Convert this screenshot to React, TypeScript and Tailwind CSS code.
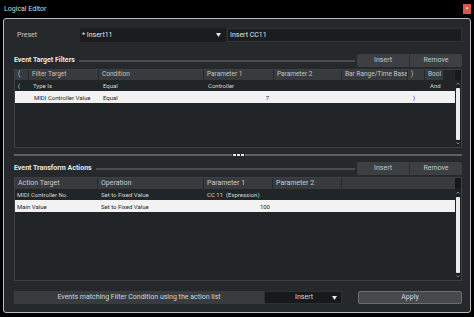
import React from 'react'

type Col = { w: string; label: string }

const filterCols: Col[] = [
  { w: 'w-[14px]', label: '(' },
  { w: 'w-[70px]', label: 'Filter Target' },
  { w: 'w-[105px]', label: 'Condition' },
  { w: 'w-[70px]', label: 'Parameter 1' },
  { w: 'w-[68px]', label: 'Parameter 2' },
  { w: 'w-[66px]', label: 'Bar Range/Time Base' },
  { w: 'w-[17px]', label: ')' },
  { w: 'w-[19px]', label: 'Bool' },
]

const actionCols: Col[] = [
  { w: 'w-[83px]', label: 'Action Target' },
  { w: 'w-[106px]', label: 'Operation' },
  { w: 'w-[69px]', label: 'Parameter 1' },
  { w: 'w-[69px]', label: 'Parameter 2' },
]

function Caret({ className = '' }: { className?: string }) {
  return (
    <svg width="5" height="4" viewBox="0 0 5 4" className={className}>
      <path d="M0 0 L5 0 L2.5 4 Z" fill="#e8e8e8" />
    </svg>
  )
}

function ScrollBar() {
  return (
    <div className="w-[6px] flex flex-col items-center bg-[#1f2225]">
      <svg width="4" height="3" viewBox="0 0 4 3" className="mt-[2px]">
        <path d="M0.5 2.5 L2 1 L3.5 2.5" stroke="#9a9da0" strokeWidth="0.8" fill="none" />
      </svg>
      <div className="mt-[3px] w-[4px] flex-1 rounded-[1px] bg-[#ececec]" />
      <svg width="4" height="3" viewBox="0 0 4 3" className="mt-[2px] mb-[2px]">
        <path d="M0.5 0.5 L2 2 L3.5 0.5" stroke="#9a9da0" strokeWidth="0.8" fill="none" />
      </svg>
    </div>
  )
}

function SectionHeader({ title }: { title: string }) {
  return (
    <div className="h-[13px] flex items-center">
      <span className="text-[7px] font-bold text-[#e6e6e6] whitespace-nowrap">{title}</span>
      <div className="flex-1 h-[2px] bg-[#4a4d50] ml-[4px] mr-[2px]" />
      <div className="w-[105px] h-[13px] flex rounded-[2px] bg-[#3d4043] text-[7px] text-[#c4c7ca]">
        <div className="flex-1 flex items-center justify-center border-r border-[#2c2f32]">Insert</div>
        <div className="flex-1 flex items-center justify-center">Remove</div>
      </div>
    </div>
  )
}

export default function App() {
  return (
    <div className="w-[474px] h-[317px] bg-black overflow-hidden flex flex-col font-[family-name:Roboto,sans-serif] text-[6px] text-[#d4d6d8]">
      {/* title bar */}
      <div className="h-[18px] flex items-start justify-between pl-[4px] pr-[3px]">
        <span className="mt-[4px] text-[7px] text-[#d8d8d8]">Logical Editor</span>
        <div className="mt-[4px] w-[8px] h-[10px] bg-[#d9534f] flex items-center justify-center text-[5px] text-white">×</div>
      </div>

      <div className="mx-[3px] h-[295px] border border-[#b9bdc1] rounded-[3px] bg-[#26292c] flex flex-col pl-[10px] pr-[8px] pt-[9px]">
        {/* preset */}
        <div className="h-[14px] flex items-stretch">
          <div className="w-[66px] pl-[3px] flex items-center text-[7px] text-[#c8cacc]">Preset</div>
          <div className="w-[146px] bg-[#1a1c1e] flex items-center justify-between pl-[2px] pr-[5px] text-[7px] text-[#e4e4e4]">
            <span>* Insert11</span>
            <Caret />
          </div>
          <div className="flex-1 ml-[1px] bg-[#1a1c1e] border border-[#303336] flex items-center pl-[2px] text-[7px] text-[#e4e4e4]">
            Insert CC11
          </div>
        </div>

        {/* event target filters */}
        <div className="mt-[12px]">
          <SectionHeader title="Event Target Filters" />
        </div>
        <div className="mt-[2px] h-[79px] border border-[#3e4144] bg-[#222528] flex flex-col">
          <div className="h-[10px] flex bg-[#222528] text-[6.5px] text-[#c2c5c8]">
            {filterCols.map((c) => (
              <div key={c.label} className={`${c.w} h-full bg-[#383b3e] border-r border-[#25282b] pl-[3px] flex items-center whitespace-nowrap overflow-hidden`}>
                {c.label}
              </div>
            ))}
            <div className="flex-1" />
            <div className="w-[6px] bg-[#16181a]" />
          </div>
          <div className="flex-1 flex">
            <div className="flex-1 flex flex-col">
              <div className="h-[11px] flex items-center">
                <div className="w-[14px] pl-[3px]">(</div>
                <div className="w-[70px] pl-[4px]">Type Is</div>
                <div className="w-[105px] pl-[4px]">Equal</div>
                <div className="w-[70px] pl-[4px]">Controller</div>
                <div className="w-[68px]" />
                <div className="w-[66px]" />
                <div className="w-[17px]" />
                <div className="w-[19px] pl-[5px]">And</div>
              </div>
              <div className="h-[12px] flex items-center bg-[#f2f2f2] text-[#1e1e1e]">
                <div className="w-[14px]" />
                <div className="w-[70px] pl-[5px] whitespace-nowrap">MIDI Controller Value</div>
                <div className="w-[105px] pl-[4px]">Equal</div>
                <div className="w-[70px] pr-[5px] text-right">7</div>
                <div className="w-[68px]" />
                <div className="w-[66px]" />
                <div className="w-[17px] pl-[5px]">)</div>
              </div>
            </div>
            <ScrollBar />
          </div>
        </div>

        {/* splitter */}
        <div className="h-[14px] flex items-center">
          <div className="flex-1 h-[2px] bg-[#5e6164]" />
          <div className="flex gap-[1px] px-[1px]">
            <div className="w-[3px] h-[2px] bg-[#e2e2e2]" />
            <div className="w-[3px] h-[2px] bg-[#e2e2e2]" />
            <div className="w-[3px] h-[2px] bg-[#e2e2e2]" />
          </div>
          <div className="flex-1 h-[2px] bg-[#5e6164]" />
        </div>

        {/* event transform actions */}
        <SectionHeader title="Event Transform Actions" />
        <div className="mt-[2px] h-[104px] border border-[#3e4144] bg-[#222528] flex flex-col">
          <div className="h-[11px] flex text-[7px] text-[#c8cbce]">
            {actionCols.map((c) => (
              <div key={c.label} className={`${c.w} h-full bg-[#383b3e] border-r border-[#25282b] pl-[3px] flex items-center whitespace-nowrap`}>
                {c.label}
              </div>
            ))}
            <div className="flex-1 bg-[#383b3e]" />
            <div className="w-[6px] bg-[#16181a]" />
          </div>
          <div className="flex-1 flex">
            <div className="flex-1 flex flex-col">
              <div className="h-[11px] flex items-center">
                <div className="w-[83px] pl-[2px] whitespace-nowrap">MIDI Controller No.</div>
                <div className="w-[106px] pl-[3px]">Set to Fixed Value</div>
                <div className="w-[69px] pl-[3px] whitespace-nowrap">CC 11&nbsp;&nbsp;(Expression)</div>
              </div>
              <div className="h-[12px] flex items-center bg-[#f2f2f2] text-[#1e1e1e]">
                <div className="w-[83px] pl-[2px]">Main Value</div>
                <div className="w-[106px] pl-[3px]">Set to Fixed Value</div>
                <div className="w-[69px] pr-[3px] text-right">100</div>
              </div>
            </div>
            <ScrollBar />
          </div>
        </div>

        {/* bottom bar */}
        <div className="mt-[10px] h-[13px] flex items-stretch">
          <div className="w-[250px] bg-[#393c3f] flex items-center justify-center text-[7px] text-[#d2d4d6]">
            Events matching Filter Condition using the action list
          </div>
          <div className="w-[78px] bg-[#17191b] border border-[#2e3134] flex items-center justify-end pr-[4px] text-[7px] text-[#d8d8d8]">
            <span className="mr-[19px]">Insert</span>
            <Caret />
          </div>
          <div className="flex-1" />
          <div className="w-[104px] bg-[#46494c] border border-[#6c6f72] rounded-[2px] flex items-center justify-center text-[7px] text-[#d4d6d8]">
            Apply
          </div>
        </div>
      </div>
    </div>
  )
}
